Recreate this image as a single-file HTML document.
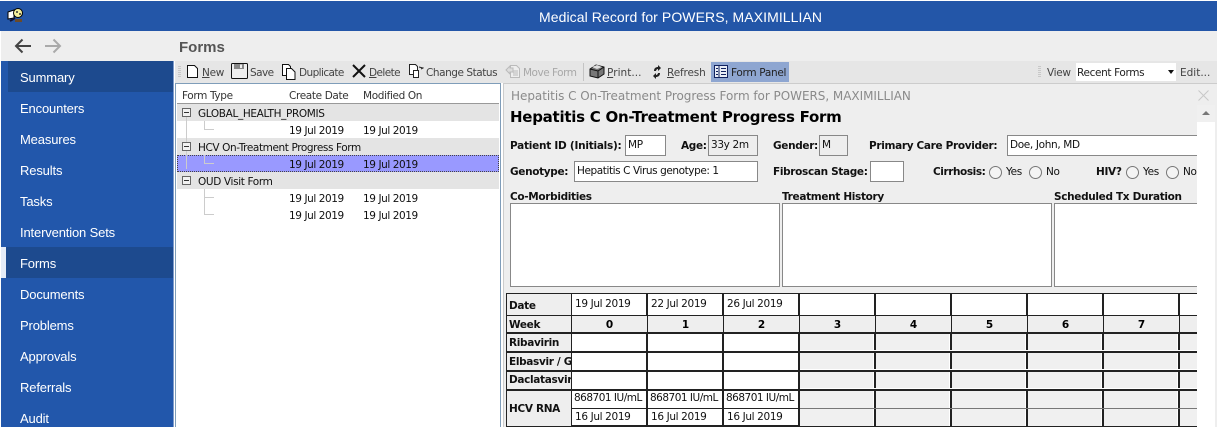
<!DOCTYPE html>
<html><head><meta charset="utf-8"><style>
html,body{margin:0;padding:0;background:#fff}
#r{position:relative;width:1217px;height:427px;overflow:hidden;background:#fff;font-family:"DejaVu Sans",sans-serif;font-size:10.5px;color:#111}
#r div,#r span.a,#r svg{position:absolute}
.t{white-space:nowrap;line-height:14px;letter-spacing:-.36px}
.b{font-weight:bold;font-size:10.5px;letter-spacing:-.33px;white-space:nowrap;line-height:14px;color:#111}
.n{left:20px;color:#fff;font-family:"Liberation Sans",sans-serif;font-size:13px;line-height:16px;white-space:nowrap;letter-spacing:-.15px}
.g{color:#333}
.box{background:#fff;border:1px solid #888;box-sizing:border-box;white-space:nowrap;overflow:hidden;line-height:14px;padding:2px 0 0 2px;letter-spacing:-.35px;font-size:10.5px}
u{text-decoration:underline}
.tb{font-size:10.5px;letter-spacing:-.3px;color:#444;white-space:nowrap;line-height:14px;top:66px}
.tn{letter-spacing:-.58px}
.rad{width:11px;height:11px;border:1px solid #777;border-radius:50%;background:#f4f4f4;box-sizing:content-box}
.w{background:#fff;width:74px;height:17px}
.d{background:#fff;width:74px;height:21px;top:1px}
.k{background:#eee;width:75px;height:16px;top:23px;text-align:center;font-weight:bold;line-height:18px;color:#000}
</style></head><body><div id="r">

<div style="left:0;top:1px;width:1217px;height:30px;background:#2356a8"></div>
<div style="left:539px;top:9px;color:#fff;font-family:'Liberation Sans',sans-serif;font-size:14px;line-height:17px;white-space:nowrap;letter-spacing:.08px">Medical Record for POWERS, MAXIMILLIAN</div>
<svg style="left:7px;top:7px" width="17" height="16" viewBox="0 0 17 16"><path d="M1 5l6-2v8l-6 1z" fill="#fff" stroke="#000"/><circle cx="11" cy="6" r="4.500" fill="#f4ee9a" stroke="#000"/><path d="M3 14l5-3" stroke="#113" stroke-width="2"/><rect x="8" y="12" width="7" height="3" fill="#6b4a2a"/><circle cx="10" cy="5" r="1" fill="#333"/><circle cx="13" cy="7" r="1" fill="#333"/></svg>

<div style="left:1px;top:31px;width:1216px;height:30px;background:#eeeeee"></div>
<svg style="left:14px;top:38px" width="18" height="16" viewBox="0 0 18 16"><path d="M17 8H2M8.500 1.500L2 8l6.500 6.500" fill="none" stroke="#444" stroke-width="2"/></svg>
<svg style="left:44px;top:38px" width="18" height="16" viewBox="0 0 18 16"><path d="M1 8h15M9.500 1.500L16 8l-6.500 6.500" fill="none" stroke="#aaa" stroke-width="2"/></svg>
<div style="left:179px;top:39px;font-family:'Liberation Sans',sans-serif;font-weight:bold;font-size:15px;line-height:18px;color:#555">Forms</div>

<div style="left:1px;top:61px;width:172px;height:366px;background:#2257ab"></div>
<div style="left:173px;top:61px;width:1px;height:366px;background:#7f9ccb"></div>
<div style="left:8px;top:61px;width:165px;height:31px;background:#1d4a8e"></div>
<div style="left:1px;top:247px;width:5px;height:31px;background:#e4ecf8"></div>
<div style="left:6px;top:247px;width:167px;height:31px;background:#1d4a8e"></div>
<div class="n" style="top:70px">Summary</div>
<div class="n" style="top:101px">Encounters</div>
<div class="n" style="top:132px">Measures</div>
<div class="n" style="top:163px">Results</div>
<div class="n" style="top:194px">Tasks</div>
<div class="n" style="top:225px">Intervention Sets</div>
<div class="n" style="top:256px">Forms</div>
<div class="n" style="top:287px">Documents</div>
<div class="n" style="top:318px">Problems</div>
<div class="n" style="top:349px">Approvals</div>
<div class="n" style="top:380px">Referrals</div>
<div class="n" style="top:411px">Audit</div>

<div style="left:175px;top:61px;width:1042px;height:22px;background:#e6e6e6"></div>
<div style="left:178px;top:66px;width:3px;height:12px;background:repeating-linear-gradient(#c8c8c8 0 1px,#e6e6e6 1px 2px)"></div>
<svg style="left:186px;top:64px" width="13" height="15" viewBox="0 0 13 15"><path d="M1.500 1.500h7l3 3v9h-10z" fill="#fff" stroke="#111"/></svg>
<div class="tb" style="left:202px"><u>N</u>ew</div>
<svg style="left:231px;top:63px" width="17" height="16" viewBox="0 0 17 16"><rect x=".5" y=".5" width="16" height="15" rx="1" fill="#eee" stroke="#111"/><rect x="3" y="1" width="10" height="5" fill="#888"/><rect x="9" y="1.500" width="2" height="3.500" fill="#eee"/></svg>
<div class="tb tn" style="left:250px">Save</div>
<svg style="left:282px;top:64px" width="14" height="16" viewBox="0 0 14 16"><path d="M.5.500h6l2 2v9h-8z" fill="#fff" stroke="#111"/><path d="M4.500 4.500h5l3.500 3.500v7.500h-8.500z" fill="#fff" stroke="#111"/></svg>
<div class="tb tn" style="left:299px">Duplicate</div>
<svg style="left:352px;top:64px" width="14" height="14" viewBox="0 0 14 14"><path d="M1 1l12 12M13 1L1 13" stroke="#111" stroke-width="2"/></svg>
<div class="tb tn" style="left:369px"><u>D</u>elete</div>
<svg style="left:409px;top:64px" width="15" height="15" viewBox="0 0 15 15"><path d="M.5.500h6l2 2v8h-8z" fill="#fff" stroke="#222"/><path d="M4.500 6.500h5v7h-5z" fill="#fff" stroke="#222"/><path d="M10 3l4 1-2 1" fill="none" stroke="#222"/></svg>
<div class="tb" style="left:426px;letter-spacing:-.45px">Change Status</div>
<svg style="left:505px;top:64px" width="16" height="15" viewBox="0 0 16 15"><path d="M5.500 1.500h6l3 3v9h-9z" fill="#eee" stroke="#bbb"/><path d="M1 6l4-4v2h3v4H5v2z" fill="#ddd" stroke="#bbb"/><path d="M8 7h5M8 9h5M8 11h5" stroke="#bbb"/></svg>
<div class="tb" style="left:523px;color:#a8a8a8;letter-spacing:-.5px">Move Form</div>
<div style="left:583px;top:63px;width:1px;height:18px;background:#c4c4c4"></div>
<svg style="left:589px;top:64px" width="16" height="15" viewBox="0 0 16 15"><path d="M1 5l6-4 8 2v7l-6 4-8-2z" fill="#777" stroke="#111"/><path d="M1 5l8 2 6-4M9 7v7" fill="none" stroke="#111"/><path d="M3 3l5-2 5 2-5 2z" fill="#ddd"/></svg>
<div class="tb" style="left:607px;letter-spacing:.05px"><u>P</u>rint...</div>
<svg style="left:652px;top:65px" width="10" height="14" viewBox="0 0 10 14"><path d="M2 6c0-3 2-4 4-4V0l3 3-3 3V4C5 4 4 5 4 6zM8 8c0 3-2 4-4 4v2l-3-3 3-3v2c1 0 2-1 2-2z" fill="#222"/></svg>
<div class="tb" style="left:667px;letter-spacing:-.15px"><u>R</u>efresh</div>
<div style="left:711px;top:62px;width:78px;height:20px;background:#8ea6d1"></div>
<svg style="left:714px;top:65px" width="14" height="13" viewBox="0 0 14 13"><rect x=".5" y=".5" width="13" height="12" fill="#e8edf6" stroke="#11225f"/><path d="M5 1v11" stroke="#11225f"/><path d="M7 3.500h5M7 6.500h5M7 9.500h5M2 3.500h2M2 6.500h2M2 9.500h2" stroke="#11225f"/></svg>
<div class="tb" style="left:731px;color:#222">Form Panel</div>
<div style="left:1038px;top:66px;width:3px;height:12px;background:repeating-linear-gradient(#c8c8c8 0 1px,#e6e6e6 1px 2px)"></div>
<div class="tb" style="left:1047px">View</div>
<div style="left:1076px;top:63px;width:100px;height:18px;background:#fff"></div>
<div class="t" style="left:1077px;top:66px;color:#222">Recent Forms</div>
<div style="left:1168px;top:70px;border:3px solid transparent;border-top:4px solid #111;border-bottom:0"></div>
<div class="tb" style="left:1180px;letter-spacing:0">Edit...</div>

<div style="left:175px;top:83px;width:326px;height:344px;background:#fff;border:1px solid #7f9db9;border-bottom:0;box-sizing:border-box"></div>
<div class="t g" style="left:182px;top:89px">Form Type</div>
<div class="t g" style="left:289px;top:89px">Create Date</div>
<div class="t g" style="left:363px;top:89px">Modified On</div>
<div style="left:177px;top:103px;width:322px;height:1px;background:#999"></div>
<div style="left:177px;top:104px;width:322px;height:17px;background:#e4e4e4"></div>
<div style="left:177px;top:138px;width:322px;height:17px;background:#e4e4e4"></div>
<div style="left:177px;top:155px;width:322px;height:17px;background:#9999ff;outline:1px dotted #444;outline-offset:-1px"></div>
<div style="left:177px;top:172px;width:322px;height:17px;background:#e4e4e4"></div>
<div style="left:186px;top:113px;width:1px;height:56px;background:#ccc"></div>
<div style="left:182px;top:108px;width:9px;height:9px;background:#f2f2f2;border:1px solid #666;box-sizing:border-box"></div>
<div style="left:184px;top:112px;width:5px;height:1px;background:#333"></div>
<div style="left:182px;top:142px;width:9px;height:9px;background:#f2f2f2;border:1px solid #666;box-sizing:border-box"></div>
<div style="left:184px;top:146px;width:5px;height:1px;background:#333"></div>
<div style="left:182px;top:176px;width:9px;height:9px;background:#f2f2f2;border:1px solid #666;box-sizing:border-box"></div>
<div style="left:184px;top:180px;width:5px;height:1px;background:#333"></div>
<div style="left:204px;top:121px;width:10px;height:9px;border-left:1px solid #ccc;border-bottom:1px solid #ccc;box-sizing:border-box"></div>
<div style="left:204px;top:155px;width:10px;height:9px;border-left:1px solid #ccc;border-bottom:1px solid #ccc;box-sizing:border-box"></div>
<div style="left:204px;top:189px;width:10px;height:9px;border-left:1px solid #ccc;border-bottom:1px solid #ccc;box-sizing:border-box"></div>
<div style="left:204px;top:198px;width:10px;height:17px;border-left:1px solid #ccc;border-bottom:1px solid #ccc;box-sizing:border-box"></div>
<div class="t" style="left:198px;top:107px">GLOBAL_HEALTH_PROMIS</div>
<div class="t" style="left:198px;top:141px;letter-spacing:-.4px">HCV On-Treatment Progress Form</div>
<div class="t" style="left:198px;top:175px">OUD Visit Form</div>
<div class="t" style="left:289px;top:124px;letter-spacing:-.42px">19 Jul 2019</div><div class="t" style="left:363px;top:124px;letter-spacing:-.42px">19 Jul 2019</div>
<div class="t" style="left:289px;top:158px;letter-spacing:-.42px">19 Jul 2019</div><div class="t" style="left:363px;top:158px;letter-spacing:-.42px">19 Jul 2019</div>
<div class="t" style="left:289px;top:192px;letter-spacing:-.42px">19 Jul 2019</div><div class="t" style="left:363px;top:192px;letter-spacing:-.42px">19 Jul 2019</div>
<div class="t" style="left:289px;top:209px;letter-spacing:-.42px">19 Jul 2019</div><div class="t" style="left:363px;top:209px;letter-spacing:-.42px">19 Jul 2019</div>

<div style="left:503px;top:83px;width:714px;height:344px;background:#eeeeee;border-left:1px solid #ccc;border-top:1px solid #ccc;box-sizing:border-box"></div>
<div style="left:511px;top:88px;color:#8a8a8a;font-size:12px;line-height:16px;white-space:nowrap;letter-spacing:-.04px">Hepatitis C On-Treatment Progress Form for POWERS, MAXIMILLIAN</div>
<svg style="left:1198px;top:90px" width="11" height="11" viewBox="0 0 11 11"><path d="M.5.500l10 10M10.500.500l-10 10" stroke="#c8c8c8"/></svg>
<div style="left:510px;top:108px;font-weight:bold;font-size:15px;line-height:18px;white-space:nowrap;color:#000;letter-spacing:-.26px">Hepatitis C On-Treatment Progress Form</div>

<div class="b" style="left:510px;top:139px;letter-spacing:-.25px">Patient ID (Initials):</div>
<div class="box" style="left:625px;top:135px;width:41px;height:21px">MP</div>
<div class="b" style="left:681px;top:139px">Age:</div>
<div class="box" style="left:708px;top:135px;width:50px;height:21px;background:#eee">33y 2m</div>
<div class="b" style="left:773px;top:139px">Gender:</div>
<div class="box" style="left:819px;top:135px;width:29px;height:21px;background:#eee">M</div>
<div class="b" style="left:869px;top:139px">Primary Care Provider:</div>
<div class="box" style="left:1007px;top:135px;width:191px;height:21px;border-right:0">Doe, John, MD</div>

<div class="b" style="left:510px;top:165px">Genotype:</div>
<div class="box" style="left:574px;top:161px;width:184px;height:21px;letter-spacing:-.42px">Hepatitis C Virus genotype: 1</div>
<div class="b" style="left:773px;top:165px">Fibroscan Stage:</div>
<div class="box" style="left:870px;top:161px;width:34px;height:21px"></div>
<div class="b" style="left:933px;top:165px;letter-spacing:-.42px">Cirrhosis:</div>
<div class="rad" style="left:989px;top:166px"></div><div class="t" style="left:1006px;top:165px">Yes</div>
<div class="rad" style="left:1029px;top:166px"></div><div class="t" style="left:1046px;top:165px">No</div>
<div class="b" style="left:1096px;top:165px">HIV?</div>
<div class="rad" style="left:1126px;top:166px"></div><div class="t" style="left:1143px;top:165px">Yes</div>
<div class="rad" style="left:1166px;top:166px"></div><div class="t" style="left:1183px;top:165px">No</div>

<div class="b" style="left:510px;top:190px">Co-Morbidities</div>
<div class="b" style="left:782px;top:190px">Treatment History</div>
<div class="b" style="left:1054px;top:190px">Scheduled Tx Duration</div>
<div class="box" style="left:510px;top:203px;width:270px;height:84px"></div>
<div class="box" style="left:782px;top:203px;width:270px;height:84px"></div>
<div class="box" style="left:1054px;top:203px;width:143px;height:84px;border-right:0"></div>

<!-- grid -->
<div style="left:506px;top:293px;width:691px;height:134px;overflow:hidden;background:#222">
<div style="left:1px;top:1px;width:64px;height:21px;background:#eee"></div>
<div class="b" style="left:3px;top:6px">Date</div>
<div style="left:1px;top:23px;width:64px;height:16px;background:#eee"></div>
<div class="b" style="left:3px;top:25px">Week</div>
<div style="left:1px;top:41px;width:64px;height:17px;background:#eee"></div>
<div class="b" style="left:3px;top:43px">Ribavirin</div>
<div style="left:1px;top:60px;width:64px;height:17px;background:#eee;overflow:hidden"><div class="b" style="left:2px;top:2px">Elbasvir / Grazoprevir</div></div>
<div style="left:1px;top:79px;width:64px;height:17px;background:#eee;overflow:hidden"><div class="b" style="left:2px;top:1px">Daclatasvir</div></div>
<div style="left:1px;top:98px;width:64px;height:35px;background:#eee"></div>
<div class="b" style="left:3px;top:109px">HCV RNA</div>
<!-- columns -->
<div class="d" style="left:66px"></div>
<div class="t" style="left:69px;top:4px">19 Jul 2019</div>
<div class="d" style="left:142px"></div>
<div class="t" style="left:145px;top:4px">22 Jul 2019</div>
<div class="d" style="left:218px"></div>
<div class="t" style="left:221px;top:4px">26 Jul 2019</div>
<div class="d" style="left:294px"></div>
<div class="d" style="left:370px"></div>
<div class="d" style="left:446px"></div>
<div class="d" style="left:522px"></div>
<div class="d" style="left:598px"></div>
<div class="d" style="left:674px"></div>

<div class="k" style="left:66px">0</div>
<div class="k" style="left:142px">1</div>
<div class="k" style="left:218px">2</div>
<div class="k" style="left:294px">3</div>
<div class="k" style="left:370px">4</div>
<div class="k" style="left:446px">5</div>
<div class="k" style="left:522px">6</div>
<div class="k" style="left:598px">7</div>
<div class="k" style="left:674px"></div>

<div class="w" style="left:66px;top:41px"></div><div class="w" style="left:142px;top:41px"></div><div class="w" style="left:218px;top:41px"></div>
<div class="w" style="left:66px;top:60px"></div><div class="w" style="left:142px;top:60px"></div><div class="w" style="left:218px;top:60px"></div>
<div class="w" style="left:66px;top:79px"></div><div class="w" style="left:142px;top:79px"></div><div class="w" style="left:218px;top:79px"></div>
<div class="w" style="left:66px;top:98px"></div><div class="w" style="left:142px;top:98px"></div><div class="w" style="left:218px;top:98px"></div>
<div class="w" style="left:66px;top:116px;height:16px"></div><div class="w" style="left:142px;top:116px;height:16px"></div><div class="w" style="left:218px;top:116px;height:16px"></div>
<div class="t" style="left:68px;top:98px;letter-spacing:-.5px">868701 IU/mL</div>
<div class="t" style="left:144px;top:98px;letter-spacing:-.5px">868701 IU/mL</div>
<div class="t" style="left:220px;top:98px;letter-spacing:-.5px">868701 IU/mL</div>
<div class="t" style="left:69px;top:117px">16 Jul 2019</div>
<div class="t" style="left:145px;top:117px">16 Jul 2019</div>
<div class="t" style="left:221px;top:117px">16 Jul 2019</div>

<div style="left:294px;top:41px;width:397px;height:92px;background:repeating-linear-gradient(90deg,#f0f0f0 0 73px,#fff 73px 74px,#222 74px 76px)"></div>
<div style="left:294px;top:57px;width:397px;height:1px;background:#fff"></div>
<div style="left:294px;top:76px;width:397px;height:1px;background:#fff"></div>
<div style="left:294px;top:95px;width:397px;height:1px;background:#fff"></div>
<div style="left:294px;top:58px;width:397px;height:2px;background:#222"></div>
<div style="left:294px;top:77px;width:397px;height:2px;background:#222"></div>
<div style="left:294px;top:96px;width:397px;height:2px;background:#222"></div>
<div style="left:294px;top:115px;width:397px;height:1px;background:#777"></div>
</div>

<div style="left:1197px;top:105px;width:18px;height:322px;background:#fff"></div>
<div style="left:1197px;top:105px;width:18px;height:17px;background:#f0f0f0"></div>
<div style="left:1202px;top:111px;border:4px solid transparent;border-bottom:4px solid #777;border-top:0"></div>
</div></body></html>
